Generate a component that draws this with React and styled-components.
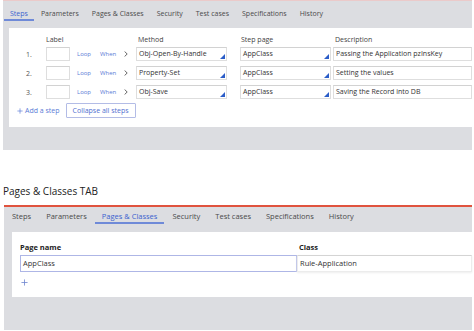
import React from 'react';
import styled, { createGlobalStyle, css } from 'styled-components';

const Global = createGlobalStyle`
  body {
    margin: 0;
    background: #fff;
    font-family: "Open Sans", "Liberation Sans", sans-serif;
    color: #333;
  }
`;

const Frame = styled.section`
  margin-left: ${p => p.left}px;
  width: ${p => 472 - p.left}px;
  background: #dcdde1;
  border-top: ${p => p.accent ? '2px solid #e0533e' : '1px solid #ebcaca'};
`;

const TabBar = styled.div`
  display: flex;
  gap: 1px;
  height: ${p => p.h}px;
  padding-left: 1px;
`;

const Tab = styled.div`
  padding: ${p => p.pt}px ${p => p.px}px 0;
  height: fit-content;
  line-height: ${p => p.lh}px;
  font-size: ${p => p.fs}px;
  white-space: nowrap;
  color: ${p => p.active ? '#3b63cf' : '#4a4a4a'};
  border-bottom: 2px solid ${p => p.active ? '#6f8ad8' : 'transparent'};
`;

const Panel = styled.div`
  margin-left: ${p => p.ml}px;
  background: #fff;
  padding: ${p => p.pad};
`;

const Bottom = styled.div`
  height: ${p => p.h}px;
`;

const stepColumns = css`
  display: grid;
  grid-template-columns: 37px 24px 27px 24px 15px 91px 106px 1fr;
  align-items: center;
  font-size: 7px;
`;

const HeadRow = styled.div`
  ${stepColumns}
  height: 10px;
  line-height: 10px;
  margin-bottom: 2px;
  color: #444;
`;

const Head = styled.div`
  padding-left: ${p => p.pl || 0}px;
`;

const Rows = styled.div`
  display: flex;
  flex-direction: column;
  gap: 5px;
`;

const StepRow = styled.div`
  ${stepColumns}
  height: 14px;
`;

const Num = styled.div`
  padding-left: 17px;
  color: #555;
`;

const Box = styled.div`
  position: relative;
  height: 14px;
  box-sizing: border-box;
  border: 1px solid #dedede;
  border-top-color: #d2d2d2;
  background: #fff;
  line-height: 12px;
  padding-left: 2px;
  color: #333;
  white-space: nowrap;
  overflow: hidden;
  margin: ${p => p.m || '0'};

  ${p => p.picker && `
    &::after {
      content: '';
      position: absolute;
      right: 1px;
      bottom: 1px;
      border-style: solid;
      border-width: 0 0 5px 5px;
      border-color: transparent transparent #2b5dc8 transparent;
    }
  `}
`;

const LinkText = styled.div`
  color: #5b7bd6;
  font-size: 6px;
  padding-left: ${p => p.pl}px;
`;

const Chevron = styled.div`
  display: flex;
  align-items: center;
  padding-left: 3px;
`;

const Actions = styled.div`
  display: flex;
  align-items: center;
  margin-top: 4px;
  padding-left: 8px;
  gap: 6px;
`;

const AddLink = styled.div`
  display: flex;
  align-items: center;
  gap: 2px;
  color: #5b7bd6;
  font-size: 7px;
`;

const Button = styled.button`
  height: 15px;
  width: 70px;
  padding: 0;
  border: 1px solid #b3bce6;
  background: #fff;
  border-radius: 1px;
  color: #4f6fcf;
  font-family: inherit;
  font-size: 7px;
`;

const Heading = styled.h2`
  margin: 36px 0 0 3px;
  font-size: 10px;
  font-weight: 400;
  color: #222;
  line-height: 10px;
  height: 19px;
`;

const PagesGrid = styled.div`
  display: grid;
  grid-template-columns: 277px 1fr;
  font-size: 7.5px;
`;

const Label = styled.div`
  font-weight: 700;
  color: #222;
  line-height: 10px;
  padding-left: ${p => p.pl}px;
  margin-bottom: 3px;
`;

const Field = styled.div`
  height: 17px;
  box-sizing: border-box;
  line-height: 15px;
  padding-left: 2px;
  color: #333;
  border: 1px solid ${p => p.focus ? '#aeb6e6' : '#ececec'};
  border-top-color: ${p => p.focus ? '#aeb6e6' : '#d4d4d4'};
  box-shadow: ${p => p.focus ? 'none' : '0 1px 2px #eee'};
`;

const AddRow = styled.div`
  display: flex;
  padding: 7px 0 0 1px;
  height: 7px;
`;

const PlusIcon = ({ size, color }) => (
  <svg width={size} height={size} viewBox="0 0 8 8">
    <path d="M4 0.5V7.5M0.5 4H7.5" stroke={color} strokeWidth="0.9" fill="none" />
  </svg>
);

const topTabs = ['Steps', 'Parameters', 'Pages & Classes', 'Security', 'Test cases', 'Specifications', 'History'];

const steps = [
  { n: '1.', method: 'Obj-Open-By-Handle', page: 'AppClass', desc: 'Passing the Application pzInsKey' },
  { n: '2.', method: 'Property-Set', page: 'AppClass', desc: 'Setting the values' },
  { n: '3.', method: 'Obj-Save', page: 'AppClass', desc: 'Saving the Record into DB' },
];

export default function App() {
  return (
    <>
      <Global />
      <Frame left={3}>
        <TabBar h={27}>
          {topTabs.map(t => (
            <Tab key={t} active={t === 'Steps'} pt={8} px={6} lh={10} fs={7}>{t}</Tab>
          ))}
        </TabBar>
        <Panel ml={6} pad="7px 0 9px 0">
          <HeadRow>
            <Head />
            <Head>Label</Head>
            <Head />
            <Head />
            <Head />
            <Head pl={2}>Method</Head>
            <Head pl={14}>Step page</Head>
            <Head pl={2}>Description</Head>
          </HeadRow>
          <Rows>
            {steps.map(s => (
              <StepRow key={s.n}>
                <Num>{s.n}</Num>
                <Box />
                <LinkText pl={7}>Loop</LinkText>
                <LinkText pl={3}>When</LinkText>
                <Chevron>
                  <svg width="4" height="6" viewBox="0 0 4 6">
                    <polyline points="0.6,0.5 3.2,3 0.6,5.5" fill="none" stroke="#555" strokeWidth="0.9" />
                  </svg>
                </Chevron>
                <Box picker>{s.method}</Box>
                <Box picker m="0 2px 0 13px">{s.page}</Box>
                <Box>{s.desc}</Box>
              </StepRow>
            ))}
          </Rows>
          <Actions>
            <AddLink><PlusIcon size={6} color="#5b7bd6" />Add a step</AddLink>
            <Button>Collapse all steps</Button>
          </Actions>
        </Panel>
        <Bottom h={23} />
      </Frame>

      <Heading>Pages &amp; Classes TAB</Heading>

      <Frame left={4} accent>
        <TabBar h={25}>
          {topTabs.map(t => (
            <Tab key={t} active={t === 'Pages & Classes'} pt={4} px={7} lh={11} fs={7.5}>{t}</Tab>
          ))}
        </TabBar>
        <Panel ml={8} pad="10px 0 11px 8px">
          <PagesGrid>
            <Label pl={0}>Page name</Label>
            <Label pl={2}>Class</Label>
            <Field focus>AppClass</Field>
            <Field>Rule-Application</Field>
          </PagesGrid>
          <AddRow><PlusIcon size={7} color="#6b83cf" /></AddRow>
        </Panel>
        <Bottom h={33} />
      </Frame>
    </>
  );
}
